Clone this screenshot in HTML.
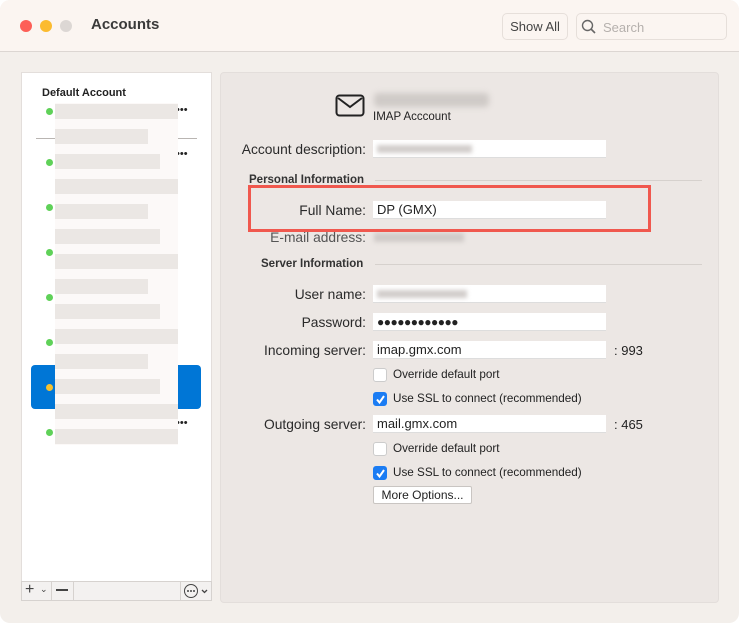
<!DOCTYPE html><html><head><style>
*{margin:0;padding:0;box-sizing:border-box}
body{width:739px;height:623px;background:#fff;font-family:"Liberation Sans",sans-serif;font-size:13px;color:#222;position:relative;overflow:hidden}
.a{position:absolute}
.win{left:0;top:0;width:739px;height:623px;background:#f3efeb;border-radius:10px;overflow:hidden}
.tb{left:0;top:0;width:739px;height:52px;background:#fbf5f1;border-bottom:1px solid #dcd6d2}
.dot{width:12px;height:12px;border-radius:50%;top:20px}
.inp{background:#fff;height:18px;left:373px;width:233px;border-bottom:1px solid #ddd;font-size:13px;padding:1px 4px;line-height:16px}
.lbl{right:373px;text-align:right;font-size:13.8px;white-space:nowrap;color:#2a2a2a}
.sec{font-weight:bold;font-size:11.5px;color:#333}
.hl{height:1px;background:#d6d1cd}
.cb{left:373px;width:14px;height:14px;border-radius:3px;background:#fff;border:1px solid #ccc}
.cbo{background:#1b7cf3;border-color:#1b7cf3}
.cbt{left:393px;font-size:11.7px}
.bar{left:55px;height:15px;background:#ebe7e4}
.g{width:7px;height:7px;border-radius:50%;background:#5fd158;left:46px}
</style></head><body>
<div class="a win">
<div class="a tb"></div>
<div class="a dot" style="left:20px;background:#fd5f57"></div>
<div class="a dot" style="left:40px;background:#fbbb2f"></div>
<div class="a dot" style="left:60px;background:#dcd7d4"></div>
<div class="a" style="left:91px;top:16px;font-size:15px;font-weight:bold;color:#3a3a3a">Accounts</div>
<div class="a" style="left:502px;top:13px;width:66px;height:27px;border:1px solid #e6dfda;border-radius:5px;font-size:13px;line-height:25px;text-align:center;color:#444">Show All</div>
<div class="a" style="left:576px;top:13px;width:151px;height:27px;border:1px solid #e6dfda;border-radius:5px"></div>
<svg class="a" style="left:581px;top:19px" width="16" height="16"><circle cx="6.5" cy="6.5" r="5" fill="none" stroke="#666" stroke-width="1.4"/><line x1="10" y1="10" x2="14" y2="14" stroke="#666" stroke-width="1.6"/></svg>
<div class="a" style="left:603px;top:20px;font-size:13px;color:#b5b0ad">Search</div>

<div class="a" style="left:21px;top:72px;width:191px;height:529px;background:#fff;border:1px solid #e3dedb"></div>
<div class="a" style="left:42px;top:87px;font-size:11px;font-weight:bold">Default Account</div>
<div class="a" style="left:36px;top:138px;width:161px;height:1px;background:#b9b5b2"></div>
<div class="a" style="left:31px;top:365px;width:170px;height:44px;background:#0076d6;border-radius:4px"></div>
<div class="a g" style="top:108px"></div><div class="a g" style="top:159px"></div><div class="a g" style="top:204px"></div><div class="a g" style="top:249px"></div><div class="a g" style="top:294px"></div><div class="a g" style="top:339px"></div><div class="a g" style="top:384px;background:#f5c12f"></div><div class="a g" style="top:429px"></div>
<div class="a" style="left:176px;top:104px;font-size:11px">•••</div>
<div class="a" style="left:176px;top:148px;font-size:11px">•••</div>
<div class="a" style="left:176px;top:417px;font-size:11px">•••</div>
<div class="a" style="left:55px;top:103px;width:123px;height:342px;background:#fcf9f8"></div>
<div class="a bar" style="top:104px;width:123px"></div><div class="a bar" style="top:129px;width:93px"></div><div class="a bar" style="top:154px;width:105px"></div>
<div class="a bar" style="top:179px;width:123px"></div><div class="a bar" style="top:204px;width:93px"></div><div class="a bar" style="top:229px;width:105px"></div>
<div class="a bar" style="top:254px;width:123px"></div><div class="a bar" style="top:279px;width:93px"></div><div class="a bar" style="top:304px;width:105px"></div>
<div class="a bar" style="top:329px;width:123px"></div><div class="a bar" style="top:354px;width:93px"></div><div class="a bar" style="top:379px;width:105px"></div>
<div class="a bar" style="top:404px;width:123px"></div><div class="a bar" style="top:429px;width:123px"></div>
<div class="a" style="left:21px;top:581px;width:191px;height:20px;background:#f3f1f0;border:1px solid #d6d2cf"></div>
<div class="a" style="left:51px;top:581px;width:1px;height:20px;background:#d6d2cf"></div>
<div class="a" style="left:73px;top:581px;width:1px;height:20px;background:#d6d2cf"></div>
<div class="a" style="left:180px;top:581px;width:1px;height:20px;background:#d6d2cf"></div>
<div class="a" style="left:25px;top:581px;font-size:16px;color:#444">+</div>
<div class="a" style="left:40px;top:584px;font-size:9px;color:#444">⌄</div>
<div class="a" style="left:56px;top:589px;width:12px;height:1.5px;background:#444"></div>
<svg class="a" style="left:183px;top:583px" width="28" height="16"><circle cx="8" cy="8" r="6.5" fill="none" stroke="#444"/><circle cx="5" cy="8" r="1" fill="#444"/><circle cx="8" cy="8" r="1" fill="#444"/><circle cx="11" cy="8" r="1" fill="#444"/><path d="M19 7l2.5 2.5L24 7" fill="none" stroke="#444" stroke-width="1.3"/></svg>

<div class="a" style="left:220px;top:72px;width:499px;height:531px;background:#ece7e4;border:1px solid #e3dedb;border-radius:4px"></div>
<svg class="a" style="left:335px;top:94px" width="32" height="24"><rect x="1.5" y="1.5" width="27" height="20" rx="3" fill="none" stroke="#222" stroke-width="2"/><path d="M3 4l12 9 12-9" fill="none" stroke="#222" stroke-width="2"/></svg>
<div class="a" style="left:374px;top:93px;width:115px;height:14px;background:#cfcac7;filter:blur(3px);border-radius:4px"></div>
<div class="a" style="left:373px;top:111px;font-size:11.5px">IMAP Acccount</div>

<div class="a lbl" style="top:142px">Account description:</div>
<div class="a inp" style="top:140px"><span style="display:inline-block;width:95px;height:8px;background:#d2cdcb;filter:blur(2px);margin-top:4px"></span></div>
<div class="a sec" style="left:249px;top:174px">Personal Information</div>
<div class="a hl" style="left:375px;top:180px;width:327px"></div>
<div class="a lbl" style="top:203px">Full Name:</div>
<div class="a inp" style="top:201px">DP (GMX)</div>
<div class="a lbl" style="top:230px;color:#555">E-mail address:</div>
<div class="a" style="left:374px;top:233px;width:90px;height:9px;background:#d0cbc8;filter:blur(2px)"></div>
<div class="a" style="left:248px;top:185px;width:403px;height:47px;border:3px solid #f0584e"></div>
<div class="a sec" style="left:261px;top:258px">Server Information</div>
<div class="a hl" style="left:375px;top:264px;width:327px"></div>
<div class="a lbl" style="top:287px">User name:</div>
<div class="a inp" style="top:285px"><span style="display:inline-block;width:90px;height:8px;background:#d2cdcb;filter:blur(2px);margin-top:4px"></span></div>
<div class="a lbl" style="top:315px">Password:</div>
<div class="a inp" style="top:313px;font-size:12px;letter-spacing:-0.5px">●●●●●●●●●●●●</div>
<div class="a lbl" style="top:343px">Incoming server:</div>
<div class="a inp" style="top:341px">imap.gmx.com</div>
<div class="a" style="left:614px;top:343px">: 993</div>
<div class="a cb" style="top:368px"></div><div class="a cbt" style="top:368px">Override default port</div>
<div class="a cb cbo" style="top:392px"></div><svg class="a" style="left:375px;top:394px" width="11" height="11"><path d="M2 5.5l2.5 3L9 2" fill="none" stroke="#fff" stroke-width="2"/></svg><div class="a cbt" style="top:392px">Use SSL to connect (recommended)</div>
<div class="a lbl" style="top:417px">Outgoing server:</div>
<div class="a inp" style="top:415px">mail.gmx.com</div>
<div class="a" style="left:614px;top:417px">: 465</div>
<div class="a cb" style="top:442px"></div><div class="a cbt" style="top:442px">Override default port</div>
<div class="a cb cbo" style="top:466px"></div><svg class="a" style="left:375px;top:468px" width="11" height="11"><path d="M2 5.5l2.5 3L9 2" fill="none" stroke="#fff" stroke-width="2"/></svg><div class="a cbt" style="top:466px">Use SSL to connect (recommended)</div>
<div class="a" style="left:373px;top:486px;width:99px;height:18px;background:#fff;border:1px solid #c9c5c2;border-radius:2px;font-size:12px;text-align:center;line-height:16px">More Options...</div>
</div>
</body></html>
